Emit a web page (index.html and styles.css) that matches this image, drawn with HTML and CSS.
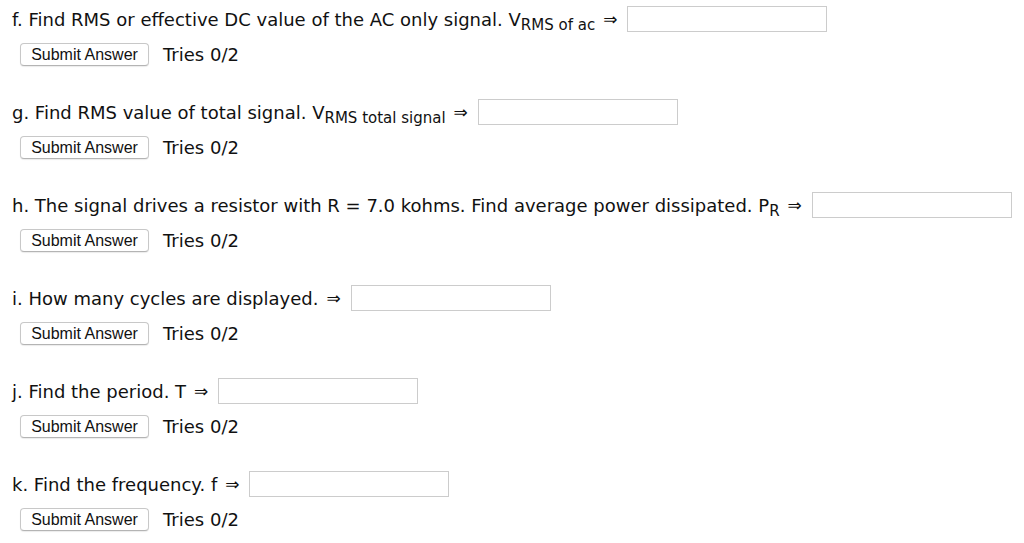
FILE: index.html
```html
<!DOCTYPE html>
<html lang="en">
<head>
  <meta charset="UTF-8">
  <title>Problem parts f–k</title>
  <link rel="stylesheet" href="styles.css">
</head>
<body>

<div class="parts">

  <!-- f -->
  <div class="part">
    <div class="question">
      <span>f. Find RMS or effective DC value of the AC only signal. V<sub>RMS of ac</sub></span>
      <span class="arrow">&rArr;</span>
      <input type="text" class="answer">
    </div>
    <div class="submit_row">
      <button type="button" class="btn_submit">Submit Answer</button>
      <span class="tries">Tries 0/2</span>
    </div>
  </div>

  <!-- g -->
  <div class="part">
    <div class="question">
      <span>g. Find RMS value of total signal. V<sub>RMS total signal</sub></span>
      <span class="arrow">&rArr;</span>
      <input type="text" class="answer">
    </div>
    <div class="submit_row">
      <button type="button" class="btn_submit">Submit Answer</button>
      <span class="tries">Tries 0/2</span>
    </div>
  </div>

  <!-- h -->
  <div class="part">
    <div class="question">
      <span>h. The signal drives a resistor with R = 7.0 kohms. Find average power dissipated. P<sub>R</sub></span>
      <span class="arrow">&rArr;</span>
      <input type="text" class="answer">
    </div>
    <div class="submit_row">
      <button type="button" class="btn_submit">Submit Answer</button>
      <span class="tries">Tries 0/2</span>
    </div>
  </div>

  <!-- i -->
  <div class="part">
    <div class="question">
      <span>i. How many cycles are displayed.</span>
      <span class="arrow">&rArr;</span>
      <input type="text" class="answer">
    </div>
    <div class="submit_row">
      <button type="button" class="btn_submit">Submit Answer</button>
      <span class="tries">Tries 0/2</span>
    </div>
  </div>

  <!-- j -->
  <div class="part">
    <div class="question">
      <span>j. Find the period. T</span>
      <span class="arrow">&rArr;</span>
      <input type="text" class="answer">
    </div>
    <div class="submit_row">
      <button type="button" class="btn_submit">Submit Answer</button>
      <span class="tries">Tries 0/2</span>
    </div>
  </div>

  <!-- k -->
  <div class="part">
    <div class="question">
      <span>k. Find the frequency. f</span>
      <span class="arrow">&rArr;</span>
      <input type="text" class="answer">
    </div>
    <div class="submit_row">
      <button type="button" class="btn_submit">Submit Answer</button>
      <span class="tries">Tries 0/2</span>
    </div>
  </div>

</div>

</body>
</html>
```

FILE: styles.css
```css
body { margin: 0; padding: 6px 12px; font-family: "DejaVu Sans", Verdana, sans-serif; font-size: 18px; color: #111; background: #fff; }
.parts { display: flex; flex-direction: column; gap: 33px; }
.part { display: flex; flex-direction: column; gap: 11px; }
.question { display: flex; align-items: center; height: 26px; white-space: nowrap; }
.question sub { font-size: 15px; vertical-align: -4px; line-height: 0; }
.arrow { font-size: 17px; margin-left: 8px; }
.answer { width: 200px; height: 26px; box-sizing: border-box; margin: 0 0 0 10px; border: 1px solid #ccc; padding: 2px 4px; background: #fff; }
.submit_row { display: flex; align-items: center; gap: 14px; padding-left: 8px; }
.btn_submit { width: 129px; height: 23px; box-sizing: border-box; padding: 0; font-family: "Liberation Sans", Arial, sans-serif; font-size: 16px; color: #111; background: #fff; border: 1px solid #c8c8c8; border-bottom-color: #b4b4b4; border-radius: 4px; box-shadow: 0 1px 1px rgba(0,0,0,0.08); }
```
